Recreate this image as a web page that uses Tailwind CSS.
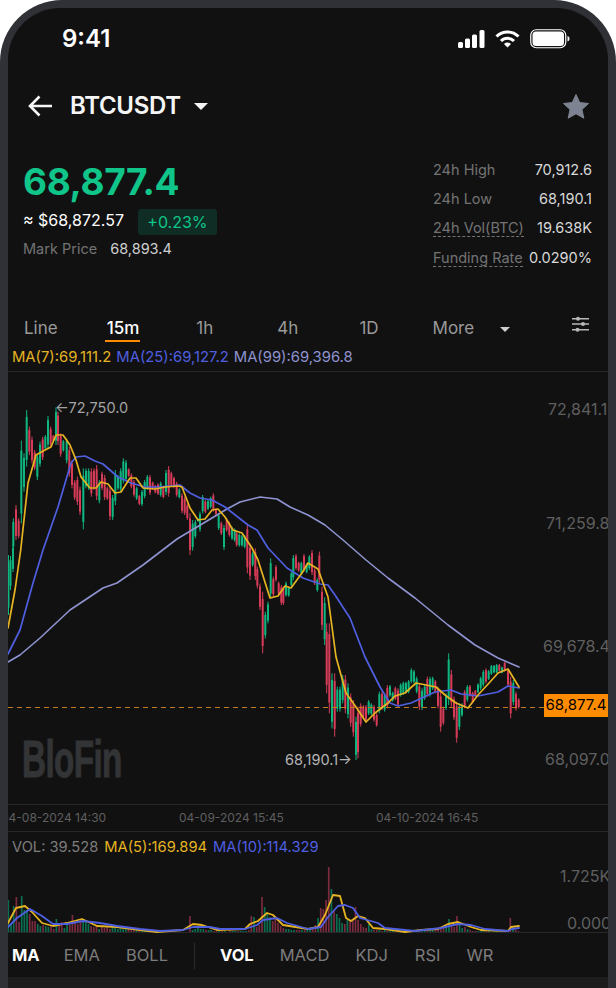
<!DOCTYPE html>
<html lang="en">
<head>
  <meta charset="UTF-8">
  <meta name="viewport" content="width=device-width, initial-scale=1.0">
  <title>BTCUSDT</title>
  <script src="https://cdn.jsdelivr.net/npm/@tailwindcss/browser@4"></script>
</head>
<body class="bg-white">
  <div class="w-[616px] h-[988px] bg-[#2f3136] rounded-t-[62px] pt-2 px-2 font-['Inter',sans-serif]">
    <main class="h-full bg-[#111112] rounded-t-[52px] overflow-hidden flex flex-col">

      <!-- Status bar -->
      <div class="h-[58px] shrink-0 flex items-center justify-between pl-[54px] pr-[38px] pt-[3px]">
        <span class="text-[24px] leading-none font-semibold text-white">9:41</span>
        <div class="flex items-center gap-[10px]">
          <svg width="27" height="18" viewBox="0 0 27 18" fill="#fff">
            <rect x="0" y="12" width="5" height="6" rx="1.5"/><rect x="7" y="8.500" width="5" height="9.500" rx="1.500"/><rect x="14" y="4.500" width="5" height="13.500" rx="1.500"/><rect x="21.500" y="0" width="5" height="18" rx="1.500"/>
          </svg>
          <svg width="25" height="18" viewBox="0 0 25 18" fill="none" stroke="#fff" stroke-width="3">
            <path d="M1.500 6.500a15.500 15.500 0 0 1 22 0"/><path d="M6 11a9 9 0 0 1 13 0"/><path d="M12.500 17.500l-3.500-3.500a5 5 0 0 1 7 0z" fill="#fff" stroke="none"/>
          </svg>
          <svg width="40" height="20" viewBox="0 0 40 20" fill="none">
            <rect x="0.750" y="0.750" width="35" height="18" rx="5.500" stroke="#fff" stroke-width="1.200"/>
            <rect x="2.500" y="2.500" width="31.500" height="14.500" rx="3.500" fill="#fff"/>
            <path d="M37.500 7v5.500c1.300-.4 2-1.500 2-2.750s-.7-2.350-2-2.750z" fill="#fff"/>
          </svg>
        </div>
      </div>

      <!-- Header -->
      <div class="h-[80px] shrink-0 flex items-center pl-[20px] pr-[19px]">
        <svg width="24" height="22" viewBox="0 0 24 22" fill="none" stroke="#f5f5f5" stroke-width="2.600">
          <path d="M24 11H2M11.500 1.500L2 11l9.500 9.500"/>
        </svg>
        <span class="ml-[18px] text-[24px] leading-none font-semibold text-[#f5f5f5] tracking-[-0.3px]">BTCUSDT</span>
        <div class="ml-[13px] w-0 h-0 border-x-[7px] border-x-transparent border-t-[7px] border-t-[#f5f5f5]"></div>
        <svg class="ml-auto" width="26" height="25" viewBox="0 0 26 25" fill="#7d8391">
          <path d="M13 0.500l3.700 8 8.800 1-6.500 6 1.800 8.700L13 19.800l-7.800 4.400L7 15.500l-6.500-6 8.800-1z" stroke="#7d8391" stroke-linejoin="round"/>
        </svg>
      </div>

      <!-- Price block -->
      <div class="h-[158px] shrink-0 flex justify-between pl-[15px] pr-[16px]">
        <div class="flex flex-col pt-[13px]">
          <span class="text-[37px] leading-[46px] font-bold text-[#10c58a] tracking-[-0.4px]">68,877.4</span>
          <div class="flex items-center mt-[4px] h-[26px]">
            <span class="text-[16px] text-white -mt-[5px]">≈ $68,872.57</span>
            <span class="ml-[14px] w-[79px] h-[26px] rounded-[3px] bg-[#0f2d24] text-[#10c58a] text-[16px] flex items-center justify-center">+0.23%</span>
          </div>
          <div class="flex items-center mt-[3px] text-[14.500px]">
            <span class="text-[#737373]">Mark Price</span>
            <span class="ml-[13px] text-[#cfcfcf]">68,893.4</span>
          </div>
        </div>
        <dl class="w-[159px] pt-[15px] text-[14.500px] leading-[17px] flex flex-col gap-[12px]">
          <div class="flex justify-between"><dt class="text-[#737373]">24h High</dt><dd class="text-[#d8d8d8]">70,912.6</dd></div>
          <div class="flex justify-between"><dt class="text-[#737373]">24h Low</dt><dd class="text-[#d8d8d8]">68,190.1</dd></div>
          <div class="flex justify-between"><dt class="text-[#737373] border-b border-dashed border-[#737373] h-[18px]">24h Vol(BTC)</dt><dd class="text-[#d8d8d8]">19.638K</dd></div>
          <div class="flex justify-between"><dt class="text-[#737373] border-b border-dashed border-[#737373] h-[18px]">Funding Rate</dt><dd class="text-[#d8d8d8]">0.0290%</dd></div>
        </dl>
      </div>

      <!-- Timeframe tabs -->
      <div class="h-[44px] shrink-0 relative flex items-center text-[17px] text-[#9a9a9a] pt-[6px]">
        <span class="ml-[16px]">Line</span>
        <span class="ml-[49px] relative font-medium text-white">15m<i class="absolute left-[-2px] right-[-1px] top-[24px] h-[2px] bg-[#ff8c00]"></i></span>
        <span class="ml-[57px]">1h</span>
        <span class="ml-[64px]">4h</span>
        <span class="ml-[61px]">1D</span>
        <span class="ml-[54px]">More</span>
        <div class="ml-[26px] w-0 h-0 border-x-[5px] border-x-transparent border-t-[5px] border-t-[#d0d0d0]"></div>
        <svg class="ml-[62px] mb-[10px]" width="17" height="16" viewBox="0 0 17 16" fill="#b8b8b8">
          <rect y="2" width="17" height="1.500"/><rect y="7.250" width="17" height="1.500"/><rect y="13" width="17" height="1.500"/>
          <circle cx="6" cy="2.700" r="2"/><circle cx="11" cy="8" r="2"/><circle cx="5.500" cy="13.700" r="2"/>
        </svg>
      </div>

      <!-- MA legend -->
      <div class="h-[24px] shrink-0 flex items-start gap-[5px] pl-[4px] text-[14.800px] leading-[18px] whitespace-nowrap border-b border-[#26272b]">
        <span class="text-[#e6b422]">MA(7):69,111.2</span>
        <span class="text-[#4f5fe0]">MA(25):69,127.2</span>
        <span class="text-[#8f93cf]">MA(99):69,396.8</span>
      </div>

      <!-- Candle chart -->
      <div class="h-[433px] shrink-0 relative border-b border-[#26272b]">
        <span class="absolute left-[14px] top-[361px] text-[52px] leading-none font-bold text-[#333436] [-webkit-text-stroke:1px_#333436] font-['Liberation_Sans',sans-serif] origin-left scale-x-[.64] tracking-[-1px]">BloFin</span>
        <svg id="chart" class="absolute inset-0" width="600" height="433" viewBox="8 372 600 433"></svg>
        <span class="absolute left-[47px] top-[27px] text-[14.500px] leading-[18px] text-[#a3a3a3]">←72,750.0</span>
        <span class="absolute left-[277px] top-[379px] text-[14.500px] leading-[18px] text-[#b5b5b5]">68,190.1→</span>
        <span class="absolute left-[540px] top-[28px] text-[16px] leading-[18px] text-[#5f5f5f] whitespace-nowrap">72,841.1</span>
        <span class="absolute left-[538px] top-[142px] text-[16px] leading-[18px] text-[#5f5f5f] whitespace-nowrap">71,259.8</span>
        <span class="absolute left-[535px] top-[265px] text-[16px] leading-[18px] text-[#5f5f5f] whitespace-nowrap">69,678.4</span>
        <span class="absolute left-[537px] top-[378px] text-[16px] leading-[18px] text-[#5f5f5f] whitespace-nowrap">68,097.0</span>
        <span class="absolute left-[536px] top-[322px] w-[64px] h-[23px] bg-[#ff8c00] text-[15px] text-black flex items-center justify-center">68,877.4</span>
      </div>

      <!-- Date axis -->
      <div class="h-[27px] shrink-0 relative border-b border-[#26272b] text-[12px] text-[#5f5f5f] whitespace-nowrap">
        <span class="absolute left-[-7px] top-[4px]">04-08-2024 14:30</span>
        <span class="absolute left-[171px] top-[4px]">04-09-2024 15:45</span>
        <span class="absolute left-[368px] top-[4px]">04-10-2024 16:45</span>
      </div>

      <!-- Volume -->
      <div class="h-[102px] shrink-0 relative">
        <div class="h-[31px] flex items-center gap-[6px] pl-[4px] text-[14.700px] whitespace-nowrap">
          <span class="text-[#7d7d7d]">VOL: 39.528</span>
          <span class="text-[#e6b422]">MA(5):169.894</span>
          <span class="text-[#4f5fe0]">MA(10):114.329</span>
        </div>
        <svg id="vol" class="absolute inset-0" width="600" height="102" viewBox="8 832 600 102"></svg>
        <span class="absolute left-[552px] top-[35px] text-[16px] leading-[18px] text-[#5f5f5f] whitespace-nowrap">1.725K</span>
        <span class="absolute left-[559px] top-[82px] text-[16px] leading-[18px] text-[#5f5f5f] whitespace-nowrap">0.000</span>
      </div>

      <!-- Indicator tabs -->
      <div class="h-[43px] shrink-0 flex items-center gap-[26px] pl-[4px] text-[16.500px] text-[#7d7d7d]">
        <span class="font-bold text-white">MA</span>
        <span class="-ml-[2px]">EMA</span>
        <span>BOLL</span>
        <div class="w-px h-[26px] bg-[#2a2b30]"></div>
        <span class="font-bold text-white -ml-[1px]">VOL</span>
        <span>MACD</span>
        <span>KDJ</span>
        <span class="ml-[1px]">RSI</span>
        <span>WR</span>
      </div>
      <div class="flex-1 bg-[#1d1d1e]"></div>
    </main>
  </div>

  <script>
    var G = '#0fb57f', R = '#d63c57';
    // candles read off the chart: [x, top, bottom, colour], in 3x crop coordinates per block
    function block(ox, oy, rows) {
      return rows.map(function (r) { return [ox + r[0] / 3, oy + r[1] / 3, oy + r[2] / 3, r[3]]; });
    }
    var candles = [[8.500, 555, 615, G], [10.500, 556, 590, G], [13, 545, 572, G]]
      .concat(block(8, 400, [
        [16,355,450,G],[24,315,420,R],[32,355,415,R],[40,122,370,G],[48,160,275,G],[56,30,200,G],[64,80,165,R],[72,110,190,R],
        [80,150,210,R],[88,160,240,G],[96,125,200,G],[104,110,180,R],[112,105,150,G],[120,48,145,G],[128,80,140,R],[136,105,125,R],
        [144,22,135,G],[150,35,135,R],[158,100,170,R],[166,120,155,G],[176,115,190,G],[184,140,230,R],[192,180,265,R],[200,240,300,R],
        [208,230,315,R],[216,260,345,R],[226,205,388,G],[234,205,265,G],[242,205,270,G],[250,205,290,R],[258,205,270,R],[266,195,300,R],
        [274,240,310,G],[282,215,270,R],[290,225,300,R],[298,260,300,R],[306,260,360,R],[314,285,360,G],[322,210,315,G],[330,225,270,G],
        [338,205,275,G],[346,175,250,G],[354,180,245,G],[362,205,230,R],[370,220,265,R],[378,240,290,R],[386,260,300,G],[394,285,315,R],
        [402,270,318,G],[410,240,295,G],[418,225,270,G],[426,225,285,R],[434,245,270,R],[442,255,280,R],[450,250,285,R],[458,245,290,G],
        [466,260,295,R],[474,210,285,G],[482,198,290,R],[490,215,260,R],[498,230,265,R],[506,245,290,R]
      ]))
      .concat(block(170, 480, [
        [28,25,55,G],[36,40,100,R],[44,50,105,R],[52,70,120,R],[60,100,225,R],[68,120,212,G],[76,120,175,G],[84,115,125,G],[90,95,155,G],
        [98,45,100,G],[106,60,100,R],[114,60,90,G],[122,50,85,G],[130,40,95,R],[138,85,105,R],[146,100,150,G],[154,125,165,R],[162,135,210,G],
        [170,115,155,R],[178,125,170,R],[186,140,180,G],[194,145,185,G],[200,155,200,R],[208,160,200,G],[216,165,200,G],[224,165,205,G],
        [232,130,280,R],[240,190,300,R],[248,215,260,G],[256,205,300,R],[262,260,325,R],[270,310,390,R],[278,335,520,R],[286,395,475,G],
        [294,365,430,G],[302,235,355,G],[310,290,350,R],[318,255,305,R],[326,305,345,R],[334,315,375,R],[340,320,375,R],[348,305,350,G],
        [356,320,350,G],[364,275,320,G],[370,225,300,G],[378,222,270,R],[386,245,275,R],[394,245,285,G],[402,222,275,R],[410,250,280,G],
        [418,225,270,G],[426,210,285,R],[434,265,315,R],[442,295,335,G],[448,215,310,R],[456,320,450,R],[464,352,495,G]
      ]))
      .concat(block(308, 540, [
        [56,250,460,R],[64,250,520,R],[72,400,565,G],[80,400,590,R],
        [88,440,515,G],[96,440,515,G],[104,405,490,G],[112,405,520,R],[120,430,535,G],[128,460,560,R],[136,480,590,R],[144,530,660,G],[150,500,655,R],
        [158,490,560,R],[166,495,535,R],[174,495,545,R],[182,480,525,G],[190,490,525,G],[198,495,545,R],[206,520,560,R],[214,455,520,G],
        [222,455,510,R],[230,460,515,G],[238,435,505,R],[246,435,470,G],[254,455,485,G],[262,440,480,R],[270,445,500,R],[278,430,470,G],
        [286,425,465,G],[294,425,460,G],[302,420,460,G],[310,385,430,G],[318,390,430,G],[326,410,460,G],[334,430,510,R],[342,445,510,G],
        [350,435,480,G],[358,410,470,R],[366,410,470,G],[374,410,450,G],[382,420,460,R],[390,440,505,R],[398,455,575,R],[406,500,555,R],
        [414,460,510,G],[422,340,495,G],[430,390,500,R],[438,470,540,R],[446,485,608,R],[454,490,570,G],[462,490,530,G],[470,450,505,R],
        [478,435,485,G],[486,435,470,R],[494,455,490,R],[502,450,470,R],[510,430,460,G],[518,410,450,G],[526,390,440,G],[534,385,430,R],
        [542,390,420,G],[550,375,405,G],[558,375,400,G],[566,372,400,G],[574,372,395,R],[582,380,400,G],[590,365,395,R],[600,385,440,R],
        [608,410,535,R],[616,420,495,G],[624,455,512,R],[632,475,505,R]
      ]));

    var ma7 = '8,628 15,590 20.700,550 28,483 36,455 45,450 51,447 56,435 63,435 70,445 76,460 81,477 90,488 96,488 101,482 108,484 115,493 121,492 130,478 136,478 143,488 155,489 165,487 178,486 182,487 190,508 198,520 205,519 212,510 218,509 225,517 233,530 242,533 252,548 258,560 270,598 278,596 285,586 291,588 302,573 308,563 318,569 328,597 336,657 346,693 356,707 366,722 375,713 388,703 395,696 405,693 416,683 436,687 445,695 456,703 468,708 478,695 490,682 498,673 508,669 519,687';
    var ma25 = '8,654 20,630 33,583 43,550 58,507 71,463 76,457 85,456 95,461 103,464 118,477 131,483 145,487 158,487 170,486 180,485 190,493 200,498 212,500 225,507 248,525 257,530 268,548 287,568 303,578 320,584 328,585 335,595 350,618 365,657 380,687 390,703 398,706 411,703 435,692 451,690 461,694 478,696 498,692 508,686 519,688';
    var ma99 = '8,662 20,655 40,638 70,610 103,588 117,583 143,565 177,539 197,527 227,509 240,502 260,497 277,499 290,507 308,515 325,525 343,540 366,560 388,578 415,598 448,625 475,645 498,658 519,667';

    function line(points, colour, width) {
      return '<polyline points="' + points + '" fill="none" stroke="' + colour + '" stroke-width="' + width + '" stroke-linejoin="round" stroke-linecap="round"/>';
    }

    var svg = '';
    candles.forEach(function (c) {
      var inset = (c[2] - c[1]) * 0.12;
      svg += '<rect x="' + (c[0] - 0.5) + '" y="' + c[1] + '" width="1" height="' + (c[2] - c[1]) + '" fill="' + c[3] + '"/>';
      svg += '<rect x="' + (c[0] - 1) + '" y="' + (c[1] + inset) + '" width="2" height="' + (c[2] - c[1] - inset * 2) + '" fill="' + c[3] + '"/>';
    });
    svg += '<line x1="8" y1="707.500" x2="544" y2="707.500" stroke="#c07a20" stroke-dasharray="5 4"/>';
    svg += line(ma99, '#8f93cf', 1.600) + line(ma25, '#4f5fe0', 1.700) + line(ma7, '#e6b422', 1.700);
    document.getElementById('chart').innerHTML = svg;

    // volume bars, pixels tall, one per candle
    var heights = [33,8,27,36,11,37,23,23,19,12,12,9,7,8,7,6,8,4,14,8,11,5,9,8,18,11,9,13,14,11,9,7,6,8,4,7,5,6,4,6,5,4,5,4,4,4,3,4,3,3,3,3,3,2,3,2,2,2,2,2,2,2,1,1,1,1,1,1,17,3,4,5,4,4,3,3,3,2,2,2,2,2,1,3,2,2,2,2,2,2,3,17,16,6,8,36,26,20,16,12,14,10,7,5,4,4,3,3,3,3,3,3,4,4,5,8,15,25,24,33,66,44,22,19,15,10,9,13,12,13,26,13,9,6,5,9,4,3,3,3,2,3,2,2,2,1,1,1,1,1,1,1,1,2,2,2,2,3,3,4,4,5,5,6,8,14,7,6,17,8,5,6,4,3,2,2,2,3,2,2,2,1,2,2,1,2,2,2,15,4,3,2];
    var overrides = { 0: G, 2: G, 3: R, 5: G, 68: R, 95: R, 120: R, 121: G, 130: R, 165: G, 168: R, 188: R };
    var vmaFast = '8,923 16,908 25,906 32,912 42,923 53,926 67,923 82,919 97,926 117,927 140,930 157,932 183,930 193,924 202,925 217,930 245,929 250,924 258,921 267,913 273,915 283,925 308,929 318,927 325,915 333,895 340,896 346,918 351,921 358,916 365,918 373,928 385,929 405,932 421,930 438,929 448,924 458,922 471,927 481,930 508,931 511,927 519,926';
    var vmaSlow = '8,927 17,918 30,909 42,916 53,924 67,924 83,921 100,923 117,926 140,929 160,931 183,930 193,927 210,927 220,929 245,929 257,925 263,920 277,918 287,923 308,929 321,927 328,917 338,906 345,905 353,908 360,918 378,923 385,928 415,931 441,928 458,924 471,925 485,929 508,931 512,929 519,928';
    var bars = '';
    heights.forEach(function (h, i) {
      var x = 8 + i * 2.670;
      var near = candles.reduce(function (a, b) { return Math.abs(b[0] - x) < Math.abs(a[0] - x) ? b : a; });
      var c = (overrides[i] || near[3]) === G ? '#0b6e50' : '#7a2b3d';
      bars += '<rect x="' + (x - 0.5) + '" y="' + (933 - h) + '" width="1.700" height="' + h + '" fill="' + c + '"/>';
    });
    bars += '<line x1="8" y1="932.500" x2="608" y2="932.500" stroke="#26272b"/>';
    bars += line(vmaFast, '#e6b422', 1.800) + line(vmaSlow, '#4f5fe0', 1.800);
    document.getElementById('vol').innerHTML = bars;
  </script>
</body>
</html>
